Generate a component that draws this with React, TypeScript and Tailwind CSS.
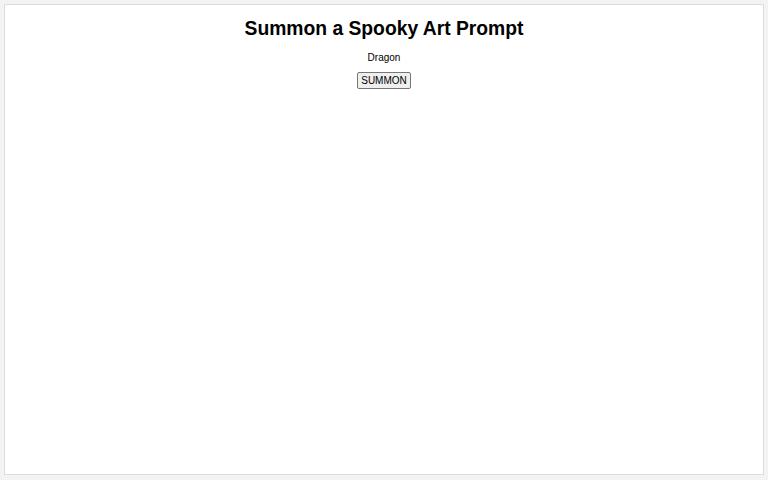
export default function App() {
  return (
    <div className="min-h-screen bg-[#f3f3f3] p-1 font-['Liberation_Sans',Arial,sans-serif]">
      <div className="h-[471px] border border-[#dcdcdc] bg-white flex flex-col items-center">
        <h1 className="mt-[12px] text-[19.3px] leading-[24px] font-bold text-black">Summon a Spooky Art Prompt</h1>
        <p className="mt-[11px] text-[10px] leading-[12px] text-black">Dragon</p>
        <button className="mt-[8px] rounded-[2px] border border-[#767676] bg-[#efefef] px-[3px] py-[1.5px] text-[10px] leading-[12px] text-black">
          SUMMON
        </button>
      </div>
    </div>
  );
}
